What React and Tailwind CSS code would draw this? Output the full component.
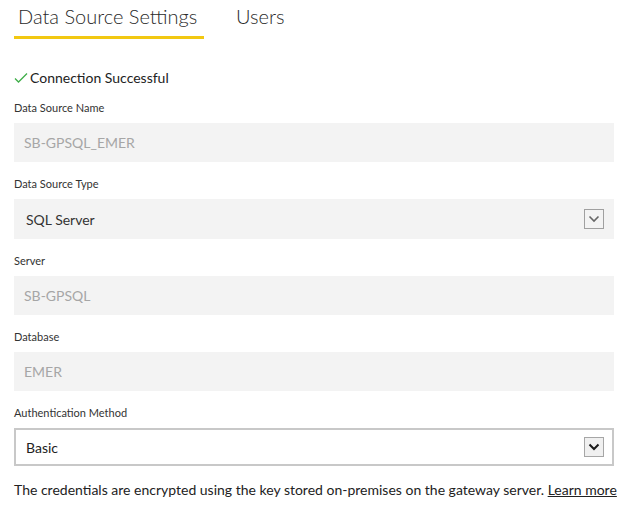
import React from 'react';

const Chevron = ({ dark }) => (
  <span
    className={`flex h-[20px] w-[20px] items-center justify-center border ${
      dark ? 'border-[#a6a6a6] bg-[#f0f0f0]' : 'border-[#a0a0a0] bg-[#f3f3f3]'
    }`}
  >
    <svg width="12" height="8" viewBox="0 0 12 8" fill="none">
      <path
        d="M1.5 1.5 L6 6 L10.5 1.5"
        stroke={dark ? '#1a1a1a' : '#666666'}
        strokeWidth={dark ? 2 : 1.6}
      />
    </svg>
  </span>
);

const Field = ({ label, value }) => (
  <div>
    <div className="h-[15px] text-[11px] leading-[15px] text-[#333]">{label}</div>
    <div className="mt-[8px] flex h-[39px] items-center bg-[#f3f3f3] px-[10px] text-[14px] text-[#a6a6a6]">
      {value}
    </div>
  </div>
);

export default function App() {
  return (
    <div
      className="h-[516px] w-[642px] bg-white pl-[14px] pr-[28px] text-[#333]"
      style={{ fontFamily: 'Lato, "Open Sans", sans-serif' }}
    >
      {/* Tabs */}
      <div className="flex items-end gap-[32px] whitespace-nowrap pt-[2px]">
        <div className="w-[190px] border-b-[3px] border-[#f2c811] pb-[6px] pl-[4px] text-[20px] font-light leading-[28px] text-[#2a2a2a]">
          Data Source Settings
        </div>
        <div className="pb-[9px] text-[20px] font-light leading-[28px] text-[#2a2a2a]">Users</div>
      </div>

      {/* Status */}
      <div className="mt-[28px] flex items-center gap-[2px] text-[14px] text-[#222]">
        <svg width="14" height="12" viewBox="0 0 14 12" fill="none">
          <path d="M1 6.5 L4.5 10 L13 1.5" stroke="#3fae49" strokeWidth="1.3" />
        </svg>
        Connection Successful
      </div>

      <div className="mt-[12px] flex flex-col gap-[14px]">
        <Field label="Data Source Name" value="SB-GPSQL_EMER" />

        <div>
          <div className="h-[15px] text-[11px] leading-[15px] text-[#333]">Data Source Type</div>
          <div className="mt-[8px] flex h-[40px] items-center justify-between bg-[#f3f3f3] pl-[12px] pr-[10px] text-[14px] text-[#333]">
            SQL Server
            <Chevron />
          </div>
        </div>

        <Field label="Server" value="SB-GPSQL" />
        <Field label="Database" value="EMER" />

        <div>
          <div className="h-[15px] text-[11px] leading-[15px] text-[#333]">Authentication Method</div>
          <div className="mt-[8px] flex h-[38px] items-center justify-between border-2 border-[#c8c8c8] bg-white pl-[10px] pr-[8px] text-[14px] text-[#222]">
            Basic
            <Chevron dark />
          </div>
        </div>
      </div>

      <p className="mt-[13px] whitespace-nowrap text-[14px] text-[#222]">
        The credentials are encrypted using the key stored on-premises on the gateway server.{' '}
        <a href="#" className="underline">
          Learn more
        </a>
      </p>
    </div>
  );
}
